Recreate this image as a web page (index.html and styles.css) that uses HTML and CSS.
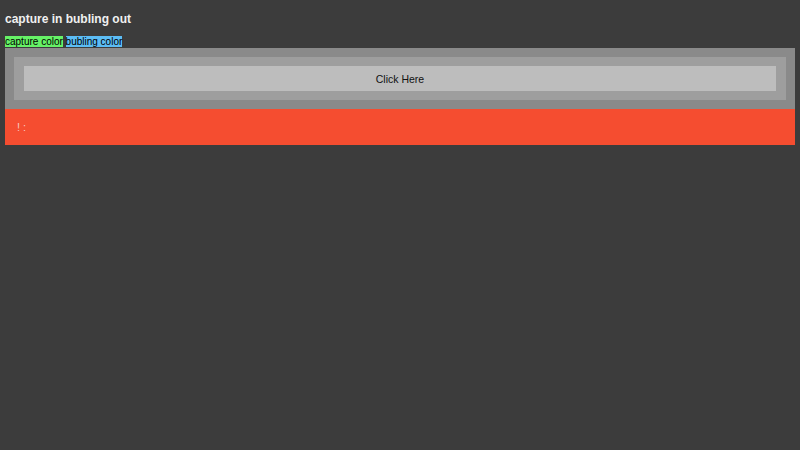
FILE: index.html
```html
<!DOCTYPE html>
<html>
<head>
<meta charset="utf-8">
<link rel="stylesheet" href="styles.css">
</head>
<body>
<h3 class="title">capture in bubling out</h3>
<div class="legend"><span class="tag tag-capture">capture color</span> <span class="tag tag-bubble">bubling color</span></div>
<div class="outer">
  <div class="inner">
    <button class="btn">Click Here</button>
  </div>
</div>
<div class="log">! :</div>
</body>
</html>
```
FILE: styles.css
```css
html, body {
  background: #3c3c3c;
}
body {
  margin: 0;
  padding: 0 5px;
  font-family: "Liberation Sans", Arial, sans-serif;
  color: #ffffff;
}
.title {
  margin: 0;
  padding-top: 12px;
  font-size: 12px;
  line-height: 15px;
  font-weight: bold;
  color: #f0f0f0;
}
.legend {
  margin-top: 9px;
  font-size: 10px;
  line-height: 11px;
  height: 12px;
  color: #000;
}
.tag {
  display: inline-block;
  height: 11px;
  line-height: 11px;
  vertical-align: top;
}
.tag-capture { background: #66f266; }
.tag-bubble { background: #5cbdf5; }
.outer {
  background: #8a8a8a;
  padding: 9px;
}
.inner {
  background: #9e9e9e;
  padding: 9px 10px;
}
.btn {
  display: block;
  width: 100%;
  height: 25px;
  margin: 0;
  border: none;
  background: #bdbdbd;
  font-family: "Liberation Sans", Arial, sans-serif;
  font-size: 10.5px;
  color: #111;
  padding: 0;
}
.log {
  background: #f54d30;
  height: 36px;
  box-sizing: border-box;
  padding: 0 12px;
  display: flex;
  align-items: center;
  font-size: 11px;
  color: #f5c8c0;
}
```
